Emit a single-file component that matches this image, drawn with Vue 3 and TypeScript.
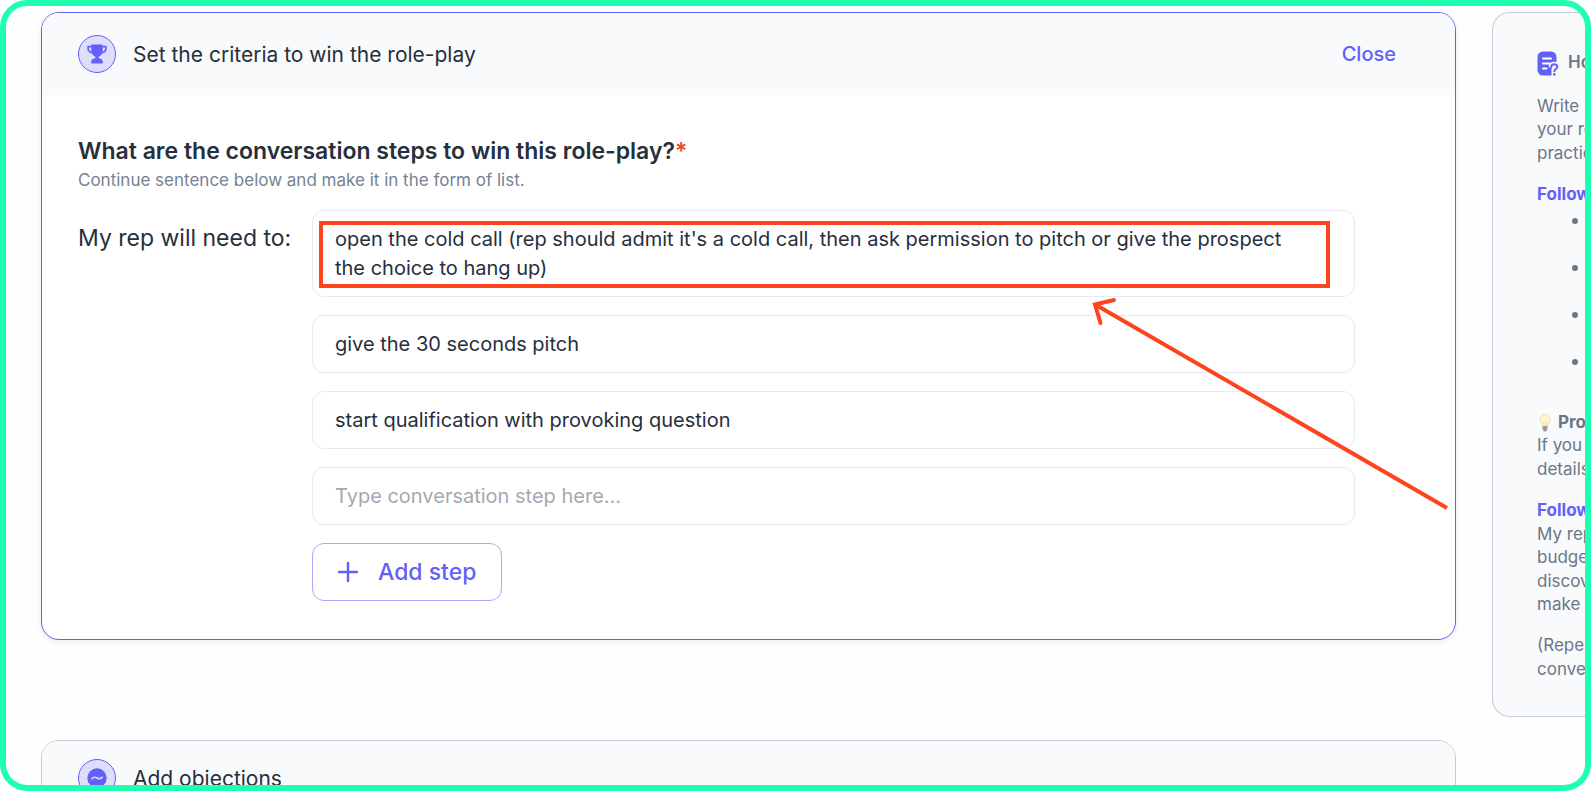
<script setup lang="ts">
import { ref } from 'vue'

interface Step {
  id: number
  text: string
}

const steps = ref<Step[]>([
  { id: 2, text: 'give the 30 seconds pitch' },
  { id: 3, text: 'start qualification with provoking question' },
  { id: 4, text: '' },
])
const firstStep = ref(
  "open the cold call (rep should admit it's a cold call, then ask permission to pitch or give the prospect the choice to hang up)",
)

function addStep(): void {
  steps.value.push({ id: steps.value.length + 2, text: '' })
}
</script>

<template>
  <div class="page">
    <main class="main">
      <section class="card active">
        <header class="card-head">
          <span class="badge">
            <svg viewBox="0 0 20 20" width="20" height="20" aria-hidden="true">
              <path d="M4.500.4h11v1.400h4.200v3c0 2.800-1.900 4.500-4.700 4.700-.9 1.700-2 2.800-3.400 3.200v1.500c2.400.2 4 1.300 4.200 3.100v2.200H4.200v-2.200c.2-1.800 1.800-2.900 4.200-3.100v-1.500c-1.400-.4-2.500-1.500-3.400-3.200C2.200 9.300.3 7.600.3 4.800v-3h4.200zM2 3.500v1.300c0 1.500.8 2.500 2.300 2.900V3.500zm16 0h-2.300v4.200c1.500-.4 2.300-1.400 2.300-2.900z" fill="currentColor" />
            </svg>
          </span>
          <h1 class="card-title">Set the criteria to win the role-play</h1>
          <button type="button" class="close">Close</button>
        </header>
        <div class="card-body">
          <h2 class="question">What are the conversation steps to win this role-play?<span class="required">*</span></h2>
          <p class="hint">Continue sentence below and make it in the form of list.</p>
          <div class="form">
            <label class="lead" for="step-1">My rep will need to:</label>
            <div class="steps">
              <div class="first">
                <textarea id="step-1" v-model="firstStep" class="field area" rows="2"></textarea>
                <div class="highlight"></div>
                <svg class="arrow" viewBox="0 0 360 220" width="360" height="220" aria-hidden="true">
                  <path d="M358 212 7 9" />
                  <path d="M25 4 6 8.500l5.500 18.500" stroke-linecap="round" />
                </svg>
              </div>
              <input
                v-for="step in steps"
                :key="step.id"
                v-model="step.text"
                class="field"
                type="text"
                aria-label="Conversation step"
                placeholder="Type conversation step here..."
              />
              <button type="button" class="add" @click="addStep">
                <svg viewBox="0 0 20 20" width="20" height="20" aria-hidden="true">
                  <path d="M10 1v18M1 10h18" fill="none" stroke="currentColor" stroke-width="2.400" stroke-linecap="round" />
                </svg>
                Add step
              </button>
            </div>
          </div>
        </div>
      </section>

      <section class="card">
        <header class="card-head collapsed">
          <span class="badge">
            <svg viewBox="0 0 20 20" width="20" height="20" aria-hidden="true">
              <circle cx="10" cy="10" r="9.700" fill="currentColor" />
              <path d="M5 10.800c1.600-2.200 3.200-1.800 5-.8s3.400 1.200 5-.6" fill="none" stroke="#dedefc" stroke-width="1.600" stroke-linecap="round" />
            </svg>
          </span>
          <h2 class="card-title">Add objections</h2>
        </header>
      </section>
    </main>

    <aside class="help">
      <h2 class="help-title">
        <svg viewBox="0 0 22 25" width="22" height="25" aria-hidden="true">
          <path d="M6 .5h8a5.500 5.500 0 0 1 5.500 5.500v5.500a5.500 5.500 0 0 0-6.500 5.500h1.500v7.500H6A5.500 5.500 0 0 1 .5 19V6A5.500 5.500 0 0 1 6 .5z" fill="currentColor" />
          <path d="M6 7.500h8M6 12.500h6.500M6 17.500h3.500" fill="none" stroke="#fff" stroke-width="2" stroke-linecap="round" />
          <path d="M14.200 16.200c0-1.900 1.300-2.900 3-2.900s3.100 1 3.100 2.700c0 2.100-3 2-3 4.300" fill="none" stroke="#f9fafc" stroke-width="5" />
          <path d="M14.200 16.200c0-1.900 1.300-2.900 3-2.900s3.100 1 3.100 2.700c0 2.100-3 2-3 4.300" fill="none" stroke="currentColor" stroke-width="2" stroke-linecap="round" />
          <circle cx="17.300" cy="23.400" r="1.300" fill="currentColor" />
        </svg>
        How
      </h2>
      <p>Write<br />your rep<br />practice</p>
      <div>
        <h3 class="accent">Follow</h3>
        <ul class="tips">
          <li></li>
          <li></li>
          <li></li>
          <li></li>
        </ul>
      </div>
      <div>
        <h3 class="pro">
          <svg viewBox="0 0 16 18" width="16" height="18" aria-hidden="true">
            <path d="M8 .5c3 0 5 2.200 5 5 0 2.500-2 3.600-2.500 6.500h-5C5 9.100 3 8 3 5.500c0-2.800 2-5 5-5z" fill="#fff6d2" stroke="#f2dfa2" />
            <path d="M6.800 12 6.500 7l1.500 1 1.500-1-.3 5" fill="none" stroke="#f8e2a0" />
            <path d="M5.600 12h4.800v3.500L9 17.500H7l-1.400-2z" fill="#9a9a98" />
          </svg>
          Pro
        </h3>
        <p>If you<br />details</p>
      </div>
      <div>
        <h3 class="accent">Follow</h3>
        <p>My rep<br />budget<br />discovery<br />make</p>
      </div>
      <p>(Repeat<br />conversation</p>
    </aside>

    <div class="frame"></div>
  </div>
</template>

<style>
body {
  margin: 0;
  background: #fff;
}
</style>

<style scoped>
.page {
  box-sizing: border-box;
  height: 100vh;
  padding: 12px 0 0 41px;
  overflow: hidden;
  display: grid;
  grid-template-columns: minmax(0, 1fr) 99px;
  gap: 36px;
  align-items: start;
  font-family: Inter, "Noto Sans", sans-serif;
  color: #26303c;
  background: #fefefe;
}

.page * {
  box-sizing: border-box;
}

h1, h2, h3, p, ul {
  margin: 0;
  padding: 0;
}

button, input, textarea {
  font: inherit;
  color: inherit;
  margin: 0;
}

.main {
  display: flex;
  flex-direction: column;
  gap: 100px;
}

.card {
  border: 1px solid #c5ccd5;
  border-radius: 18px;
  background: #fff;
}

.card.active {
  border-color: #6360f8;
  box-shadow: 0 2px 6px rgba(30, 30, 80, 0.08);
}

.card-head {
  display: flex;
  align-items: center;
  gap: 17px;
  height: 82px;
  padding: 0 59px 0 36px;
  border-radius: 17px 17px 0 0;
  background: #f9fafc;
}

.card-head.collapsed {
  height: 74px;
}

.badge {
  display: flex;
  align-items: center;
  justify-content: center;
  width: 38px;
  height: 38px;
  border: 1px solid #6360f8;
  border-radius: 50%;
  background: #dedefc;
  color: #6360f8;
}

.card-title {
  flex: 1;
  font-size: 21px;
  font-weight: 400;
}

.close {
  padding: 0;
  border: 0;
  background: none;
  color: #6360f8;
  font-size: 20px;
  font-weight: 500;
}

.card-body {
  padding: 41px 100px 38px 36px;
}

.question {
  font-size: 23px;
  line-height: 30px;
  font-weight: 600;
}

.required {
  color: #f0442e;
}

.hint {
  font-size: 17px;
  line-height: 28px;
  color: #758292;
}

.form {
  display: grid;
  grid-template-columns: 234px minmax(0, 1fr);
  margin-top: 16px;
}

.lead {
  padding-top: 14px;
  font-size: 23px;
  line-height: 28px;
}

.steps {
  display: flex;
  flex-direction: column;
  align-items: flex-start;
  gap: 18px;
}

.first {
  position: relative;
  width: 100%;
}

.field {
  display: block;
  width: 100%;
  height: 58px;
  padding: 0 22px;
  border: 1px solid #e8eaf1;
  border-radius: 12px;
  outline: 0;
  background: #fff;
  font-size: 20px;
  line-height: 29px;
}

.field::placeholder {
  color: #a5a9b0;
  opacity: 1;
}

.area {
  height: 87px;
  padding: 14px 40px 13px 22px;
  overflow: hidden;
  resize: none;
}

.highlight {
  position: absolute;
  inset: 11px 25px 9px 7px;
  border: 4px solid #ff431c;
  pointer-events: none;
}

.arrow {
  position: absolute;
  top: 86px;
  right: -94px;
  overflow: visible;
  fill: none;
  stroke: #ff431c;
  stroke-width: 4;
  pointer-events: none;
}

.add {
  display: flex;
  align-items: center;
  gap: 20px;
  height: 58px;
  padding: 0 25px;
  border: 1px solid #aaa8fb;
  border-radius: 12px;
  background: #fff;
  color: #6360f8;
  font-size: 23px;
  font-weight: 500;
  white-space: nowrap;
}

.help {
  display: flex;
  flex-direction: column;
  gap: 18px;
  padding: 36px 0 35px 44px;
  overflow: hidden;
  border: 1px solid #c5ccd5;
  border-right: 0;
  border-radius: 18px 0 0 18px;
  background: #f9fafc;
  color: #6b7787;
  font-size: 17px;
  line-height: 1.38;
  white-space: nowrap;
}

.help-title {
  display: flex;
  align-items: center;
  gap: 9px;
  height: 28px;
  font-size: 17px;
  font-weight: 600;
}

.help-title svg {
  flex: none;
  color: #6360f8;
}

.accent {
  font-size: 17px;
  font-weight: 700;
  color: #6360f8;
}

.tips {
  padding: 0 0 0 54px;
}

.tips li {
  height: 47px;
}

.tips li:last-child {
  height: 45px;
}

.tips li::marker {
  font-size: 20px;
}

.pro {
  display: flex;
  align-items: center;
  gap: 5px;
  font-size: 17px;
  font-weight: 700;
}

.frame {
  position: fixed;
  inset: 0;
  border: 6px solid #1fffb0;
  border-radius: 27px;
  box-shadow: 0 0 0 30px #fff;
  pointer-events: none;
}
</style>
